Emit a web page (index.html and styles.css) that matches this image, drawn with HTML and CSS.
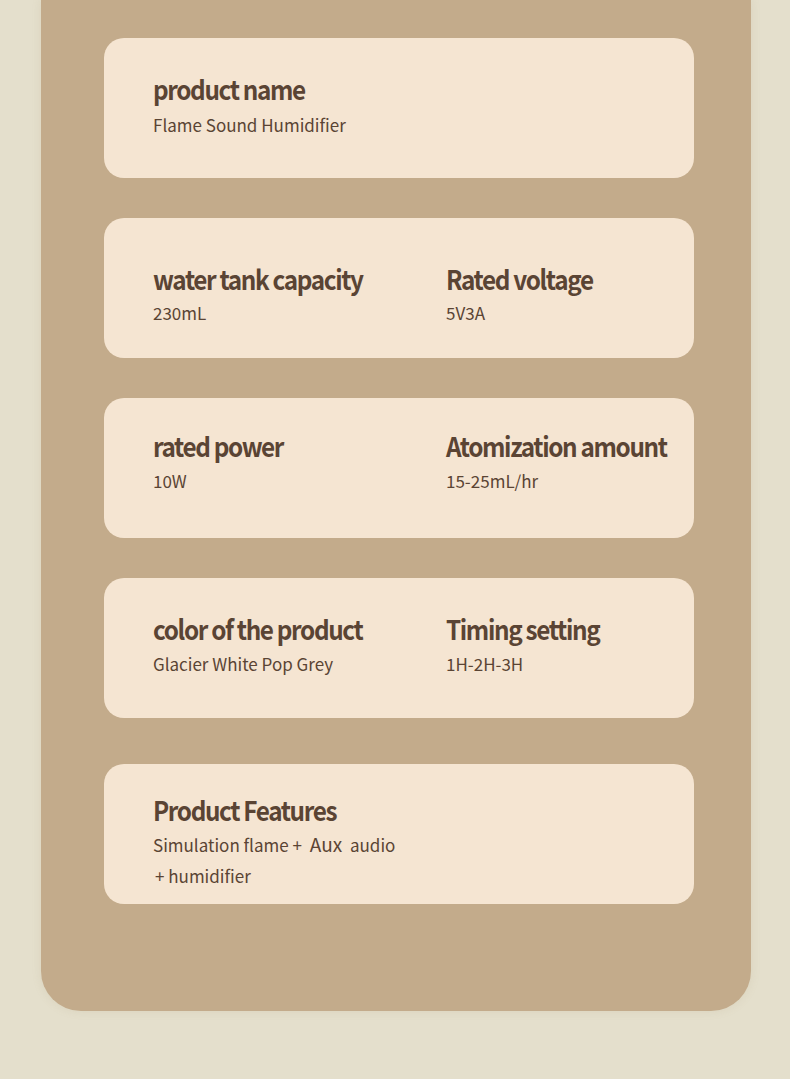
FILE: index.html
```html
<!DOCTYPE html>
<html lang="en">
<head>
<meta charset="utf-8">
<link rel="stylesheet" href="styles.css">
</head>
<body>
<div class="panel">
  <section class="card card-1">
    <div class="item">
      <h2 class="title">product name</h2>
      <p class="value">Flame Sound Humidifier</p>
    </div>
  </section>
  <section class="card card-2">
    <div class="item">
      <h2 class="title">water tank capacity</h2>
      <p class="value">230mL</p>
    </div>
    <div class="item">
      <h2 class="title">Rated voltage</h2>
      <p class="value">5V3A</p>
    </div>
  </section>
  <section class="card card-3">
    <div class="item">
      <h2 class="title">rated power</h2>
      <p class="value">10W</p>
    </div>
    <div class="item">
      <h2 class="title">Atomization amount</h2>
      <p class="value">15-25mL/hr</p>
    </div>
  </section>
  <section class="card card-4">
    <div class="item">
      <h2 class="title">color of the product</h2>
      <p class="value">Glacier White Pop Grey</p>
    </div>
    <div class="item">
      <h2 class="title">Timing setting</h2>
      <p class="value">1H-2H-3H</p>
    </div>
  </section>
  <section class="card card-5">
    <div class="item">
      <h2 class="title">Product Features</h2>
      <p class="value">Simulation flame + <span class="aux">Aux</span> audio</p>
      <p class="value value-2">+ humidifier</p>
    </div>
  </section>
</div>
</body>
</html>
```
FILE: styles.css
```css
html, body {
  margin: 0;
  padding: 0;
}
body {
  background: #e4dfcc;
  width: 790px;
  height: 1079px;
  overflow: hidden;
  font-family: "Noto Sans CJK SC", "Noto Sans", sans-serif;
}
.panel {
  margin-left: 41px;
  width: 710px;
  height: 1011px;
  box-sizing: border-box;
  background: #c3ab8b;
  border-radius: 0 0 40px 40px;
  padding: 38px 57px 0 63px;
  display: flex;
  flex-direction: column;
  gap: 40px;
  box-shadow: 0 0 10px rgba(160, 140, 100, 0.15);
}
.card {
  height: 140px;
  box-sizing: border-box;
  background: #f5e5d2;
  border-radius: 20px;
  padding: 35px 0 0 49px;
  display: grid;
  grid-template-columns: 293px 1fr;
  align-items: start;
}
.card-2 { padding-top: 45px; }
.card-3 { padding-top: 32px; }
.card-4 { padding-top: 35px; }
.card-5 {
  margin-top: 6px;
  padding-top: 30px;
}
.title {
  margin: 0;
  font-size: 27px;
  line-height: 32px;
  font-weight: 700;
  letter-spacing: -1.5px;
  white-space: nowrap;
  color: #5a4434;
  transform: scaleX(0.9);
  transform-origin: left center;
}
.value {
  margin: 4px 0 0;
  font-size: 17px;
  line-height: 32px;
  font-weight: 400;
  white-space: nowrap;
  color: #5a4434;
}
.card-2 .value,
.card-5 .value { margin-top: 2px; }
.card-3 .value,
.card-4 .value { margin-top: 3px; }
.aux {
  font-size: 19px;
  margin: 0 4px;
}
.card-5 .value-2 {
  margin-top: -1px;
  padding-left: 2px;
}
```
